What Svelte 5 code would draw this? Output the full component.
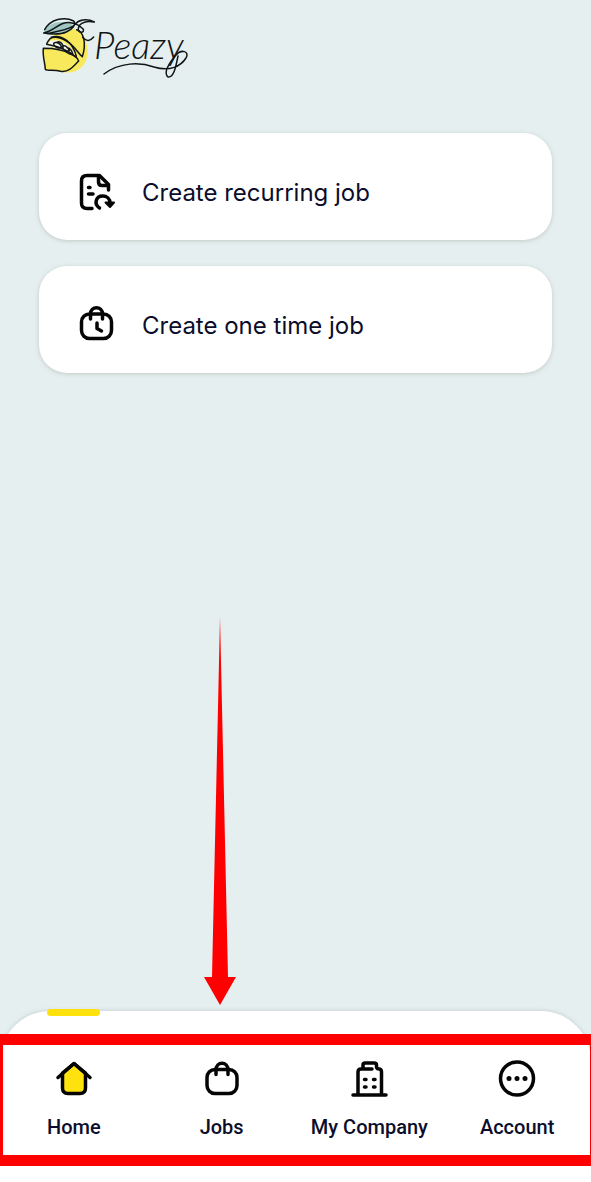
<script>
  const actions = [
    { label: 'Create recurring job', icon: 'recurring' },
    { label: 'Create one time job', icon: 'once' }
  ];
  const tabs = [
    { label: 'Home', icon: 'home' },
    { label: 'Jobs', icon: 'jobs' },
    { label: 'My Company', icon: 'company' },
    { label: 'Account', icon: 'account' }
  ];
  let active = $state('Home');
</script>

{#snippet glyph(name)}
  <svg class="icon" viewBox="0 0 38 38" aria-hidden="true">
    {#if name === 'recurring'}
      <path d="M14 34.500H9Q3.500 34.500 3.500 29V7Q3.500 1.500 9 1.500H21.500L30.500 10.500V16" />
      <path d="M20.500 2V8Q20.500 11.500 24 11.500H30" />
      <path d="M10.500 13.500H12M10.500 20H15" />
      <path d="M21.500 34C15.500 30 18 22 24.500 22C29 22 32 25 32 29" />
      <path class="solid" d="M27.500 28.500H36L32 33Z" />
    {:else if name === 'once'}
      <rect x="3.500" y="7" width="30" height="24.500" rx="8" />
      <path d="M12.500 12V7C12.500 -1.500 24.500 -1.500 24.500 7V12" />
      <path d="M19 16V21.500L23.500 24" />
    {:else if name === 'home'}
      <path class="yellow" d="M7.500 13L19 3.500L30.500 13V28Q30.500 33.500 25 33.500H13Q7.500 33.500 7.500 28Z" />
      <path d="M3 17.500L19 3.500L35 17.500" />
    {:else if name === 'jobs'}
      <rect x="4" y="9.500" width="30" height="24" rx="8" />
      <path d="M13 14.500V10C13 1 25 1 25 10V14.500" />
    {:else if name === 'company'}
      <path d="M3 35H36M8 35V12Q8 9 11 9H22M13 9V5Q13 3 15 3H24Q26.500 3 26.500 5V7Q27 9 29 9Q31.500 9 31.500 12V35" />
      <path d="M14.500 19.500H16M23.500 19.500H25M14.500 27H16M23.500 27H25" />
    {:else}
      <circle cx="19" cy="18.500" r="16.500" />
      <circle class="dot" cx="11" cy="18.500" r="2.500" />
      <circle class="dot" cx="19" cy="18.500" r="2.500" />
      <circle class="dot" cx="27" cy="18.500" r="2.500" />
    {/if}
  </svg>
{/snippet}

<div class="screen">
  <header>
    <svg class="lemon" viewBox="15 24 162 186" aria-hidden="true">
      <path class="flesh" d="M40 98C52 68 95 50 128 60C150 76 162 108 157 138C150 174 120 192 88 187L30 178L26 116L50 116Z" />
      <path class="white" d="M46 92C78 84 112 108 120 138C90 120 62 118 38 106Z" />
      <path class="leaf" d="M26 68C34 42 70 28 108 40C118 52 104 68 76 73C58 76 40 73 26 68Z" />
      <path d="M29 59C46 28 88 18 116 33C125 42 112 59 94 66C72 76 46 72 26 69C58 64 72 34 107 38C122 40 135 47 145 58C148 68 135 70 130 61C128 45 144 29 178 36C154 24 130 30 120 43C108 59 70 62 38 71" />
      <path d="M125 59C148 66 154 102 142 140C125 126 119 106 92 92C74 82 56 79 45 86C40 92 35 98 35 103C62 108 99 120 121 140" />
      <path d="M49 82C80 72 113 96 124 139" />
      <path d="M25 115C22 138 30 158 31 178C39 184 56 178 77 184C101 188 116 169 131 153C126 140 119 136 105 132C80 116 50 115 25 115Z" />
      <path d="M57 105C51 93 75 96 79 110C73 117 61 113 57 105M66 97C75 91 88 105 83 115M82 113C85 101 99 110 103 122C95 127 86 121 82 113M96 113C105 114 111 123 113 131" />
      <path d="M143 82C154 96 166 93 176 81" />
    </svg>
    <span class="wordmark">Peazy
      <svg class="flourish" viewBox="0 0 90 24" aria-hidden="true">
        <path d="M2 20C18 8 38 8 52 13C68 18 79 12 84 4C88-3 79-5 74 1C67 9 61 19 66 23C72 24 74 12 76 2" />
      </svg>
    </span>
  </header>

  <main>
    {#each actions as action}
      <button class="card">
        {@render glyph(action.icon)}
        <span>{action.label}</span>
      </button>
    {/each}
  </main>

  <nav aria-label="Main">
    {#each tabs as tab}
      <button class="tab" class:active={active === tab.label} onclick={() => (active = tab.label)}>
        {@render glyph(tab.icon)}
        <span>{tab.label}</span>
      </button>
    {/each}
    <div class="frame"></div>
    <svg class="arrow" viewBox="0 0 32 388" aria-hidden="true">
      <path d="M16 0L24 360H32L16 388L0 360H8Z" />
    </svg>
  </nav>
</div>

<style>
  :global(body) {
    margin: 0;
  }
  .screen {
    min-height: 100vh;
    display: flex;
    flex-direction: column;
    background: #e6eff0;
    color: #0b0d2b;
    overflow: hidden;
  }
  header {
    display: flex;
    align-items: flex-start;
    padding: 18px 40px 0;
    height: 62px;
  }
  .lemon {
    width: 54px;
    height: 62px;
    overflow: visible;
  }
  .lemon path,
  .flourish path {
    fill: none;
    stroke: #101516;
    stroke-width: 1.5;
    stroke-linecap: round;
    stroke-linejoin: round;
  }
  .lemon path {
    stroke-width: 4.5;
  }
  .lemon .flesh {
    fill: #f8e95c;
    stroke: none;
  }
  .lemon .white {
    fill: #f4f5e8;
    stroke: none;
  }
  .lemon .leaf {
    fill: #9fc6c1;
    stroke: none;
  }
  .wordmark {
    position: relative;
    padding-top: 4px;
    font: italic 300 38px/44px Lato, sans-serif;
    color: #101516;
  }
  .flourish {
    position: absolute;
    left: 8px;
    top: 36px;
    width: 90px;
    height: 24px;
    overflow: visible;
  }
  main {
    flex: 1;
    display: flex;
    flex-direction: column;
    gap: 26px;
    padding: 53px 39px 0;
  }
  button {
    border: 0;
    margin: 0;
    color: inherit;
    cursor: pointer;
  }
  .card {
    display: flex;
    align-items: center;
    gap: 26px;
    height: 107px;
    padding: 12px 39px 0;
    border-radius: 28px;
    background: #fff;
    box-shadow: 0 1px 4px #a8b3a999;
    font: 400 24px/32px Inter, sans-serif;
    text-align: left;
  }
  .icon {
    width: 38px;
    height: 38px;
    flex: none;
    overflow: visible;
    fill: none;
    stroke: #050505;
    stroke-width: 3.5;
    stroke-linecap: round;
    stroke-linejoin: round;
  }
  .solid,
  .dot {
    fill: #050505;
  }
  .dot {
    stroke: none;
  }
  .solid {
    stroke-width: 2;
  }
  .yellow {
    fill: #ffe20d;
  }
  nav {
    position: relative;
    display: grid;
    grid-template-columns: repeat(4, 1fr);
    height: 171px;
    border-radius: 50px 50px 0 0;
    background: #fff;
    box-shadow: 0 0 4px #a8b3b399;
  }
  .tab {
    position: relative;
    display: flex;
    flex-direction: column;
    align-items: center;
    gap: 15px;
    padding: 49px 0 0;
    background: none;
    font: 500 20px/28px Roboto, sans-serif;
    white-space: nowrap;
  }
  .active::before {
    content: '';
    position: absolute;
    top: -2px;
    left: calc(50% - 27px);
    width: 53px;
    height: 7px;
    border-radius: 4px;
    background: #ffe20d;
  }
  .frame {
    position: absolute;
    inset: 23px 0 16px;
    border: solid #f00;
    border-width: 11px 1px 11px 3px;
    pointer-events: none;
  }
  .arrow {
    position: absolute;
    left: 34.5%;
    bottom: 177px;
    width: 32px;
    height: 388px;
    fill: #f00;
    pointer-events: none;
  }
</style>
